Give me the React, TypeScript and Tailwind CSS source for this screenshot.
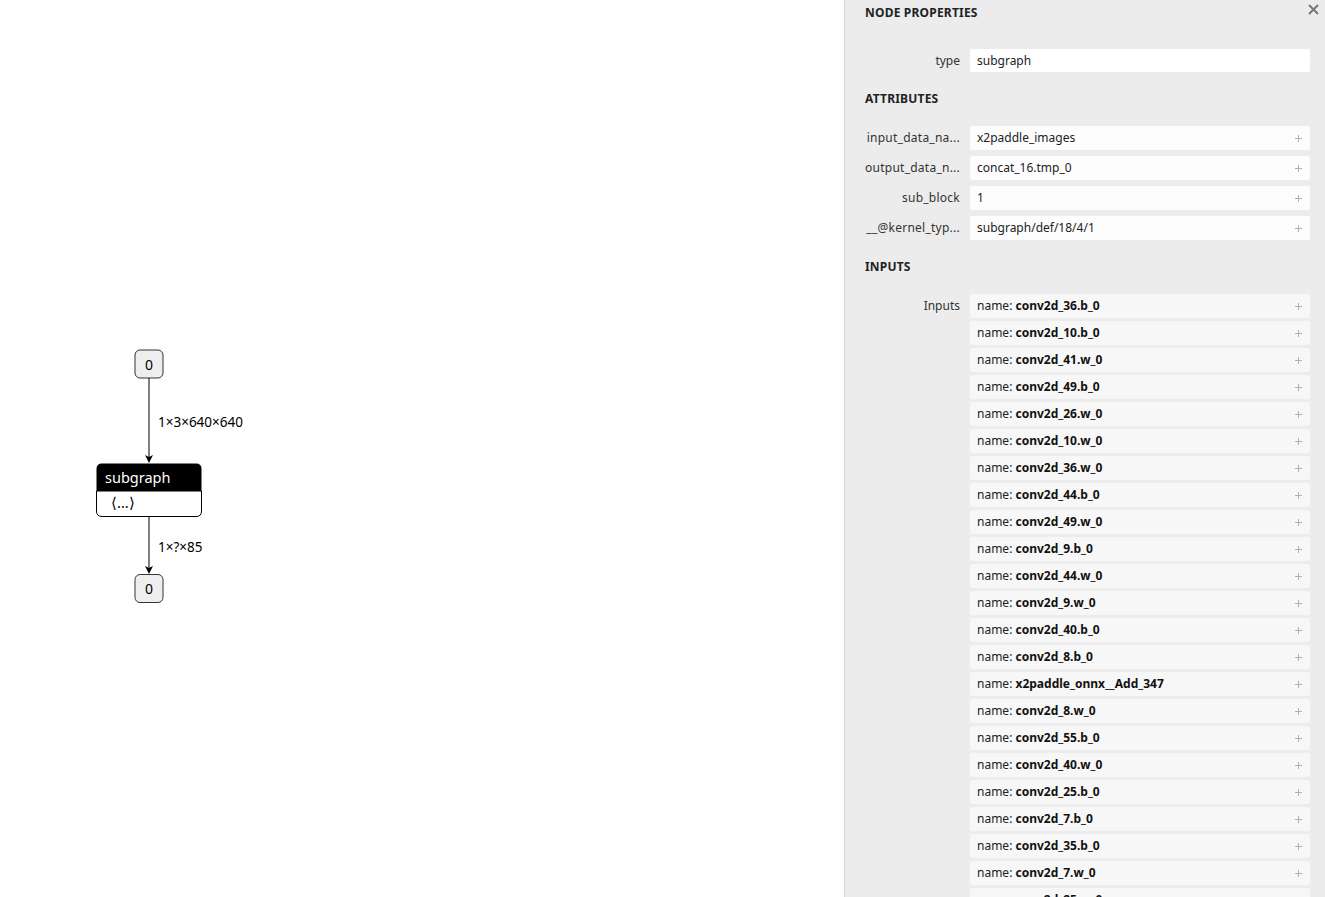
import React from "react"

const attributes = [
  { name: "input_data_na...", value: "x2paddle_images" },
  { name: "output_data_n...", value: "concat_16.tmp_0" },
  { name: "sub_block", value: "1" },
  { name: "__@kernel_typ...", value: "subgraph/def/18/4/1" },
]

const inputs = [
  "conv2d_36.b_0",
  "conv2d_10.b_0",
  "conv2d_41.w_0",
  "conv2d_49.b_0",
  "conv2d_26.w_0",
  "conv2d_10.w_0",
  "conv2d_36.w_0",
  "conv2d_44.b_0",
  "conv2d_49.w_0",
  "conv2d_9.b_0",
  "conv2d_44.w_0",
  "conv2d_9.w_0",
  "conv2d_40.b_0",
  "conv2d_8.b_0",
  "x2paddle_onnx__Add_347",
  "conv2d_8.w_0",
  "conv2d_55.b_0",
  "conv2d_40.w_0",
  "conv2d_25.b_0",
  "conv2d_7.b_0",
  "conv2d_35.b_0",
  "conv2d_7.w_0",
  "conv2d_25.w_0",
]

const Plus = () => (
  <svg width="7" height="7" viewBox="0 0 7 7" className="shrink-0">
    <path d="M3.5,0 V7 M0,3.5 H7" stroke="#b0b0b0" strokeWidth="1" />
  </svg>
)

const Graph = () => (
  <svg width="844" height="897" className="block" style={{ fontFamily: "'Noto Sans', sans-serif" }}>
    {/* input node */}
    <rect x="135" y="350" width="28" height="28" rx="5" fill="#eeeeee" stroke="#333" strokeWidth="1" />
    <text x="149" y="369.5" textAnchor="middle" fontSize="14" fill="#000">0</text>

    {/* edge in */}
    <line x1="149" y1="378" x2="149" y2="458" stroke="#000" strokeWidth="1" />
    <path d="M145,455 L149,463 L153,455 L149,457 Z" fill="#000" />
    <text x="158" y="427" fontSize="13.5" fill="#000">1×3×640×640</text>

    {/* subgraph node */}
    <path d="M96.5,491 L96.5,469 Q96.5,463.5 102,463.5 L196,463.5 Q201.5,463.5 201.5,469 L201.5,491 Z" fill="#000" />
    <path d="M96.5,491 L96.5,511 Q96.5,516.5 102,516.5 L196,516.5 Q201.5,516.5 201.5,511 L201.5,491 Z" fill="#fff" stroke="#000" strokeWidth="1" />
    <text x="105" y="483" fontSize="14.5" fill="#fff">subgraph</text>
    <text x="111" y="508" fontSize="14.5" fill="#000">⟨...⟩</text>

    {/* edge out */}
    <line x1="149" y1="517" x2="149" y2="569" stroke="#000" strokeWidth="1" />
    <path d="M145,566 L149,574 L153,566 L149,568 Z" fill="#000" />
    <text x="158" y="552" fontSize="13.5" fill="#000">1×?×85</text>

    {/* output node */}
    <rect x="135" y="574.5" width="28" height="28" rx="5" fill="#eeeeee" stroke="#333" strokeWidth="1" />
    <text x="149" y="594" textAnchor="middle" fontSize="14" fill="#000">0</text>
  </svg>
)

const SectionTitle = ({ children, className }: { children: React.ReactNode; className?: string }) => (
  <div className={"text-[12px] leading-[16px] font-bold text-[#222] tracking-[0.2px] " + (className ?? "")}>
    {children}
  </div>
)

export default function App() {
  return (
    <div
      className="flex h-[897px] w-[1325px] overflow-hidden bg-white"
      style={{ fontFamily: "'Noto Sans', 'DejaVu Sans', sans-serif" }}
    >
      <div className="w-[844px] shrink-0">
        <Graph />
      </div>
      <div className="relative flex-1 border-l border-[#d4d4d4] bg-[#ececec] pl-[20px] pr-[15px] pt-[5px]">
        <svg width="11" height="11" viewBox="0 0 11 11" className="absolute right-[6px] top-[4px]">
          <path d="M1,1 L10,10 M10,1 L1,10" stroke="#777" strokeWidth="2" />
        </svg>
        <SectionTitle>NODE PROPERTIES</SectionTitle>

        <div className="mt-[28px] flex items-center">
          <div className="w-[105px] shrink-0 pr-[10px] text-right text-[12px] text-[#333]">type</div>
          <div className="flex h-[23px] flex-1 items-center rounded-[2px] bg-white px-[7px] text-[12px] text-[#222]">
            subgraph
          </div>
        </div>

        <SectionTitle className="mt-[19px]">ATTRIBUTES</SectionTitle>

        <div className="mt-[19px] flex flex-col gap-[6px]">
          {attributes.map((a) => (
            <div key={a.name} className="flex items-center">
              <div className="w-[105px] shrink-0 whitespace-nowrap pr-[10px] text-right text-[12px] tracking-[0.25px] text-[#333]">
                {a.name}
              </div>
              <div className="flex h-[24px] flex-1 items-center justify-between rounded-[2px] bg-[#fdfdfd] pl-[7px] pr-[8px] text-[12px] text-[#222]">
                <span>{a.value}</span>
                <Plus />
              </div>
            </div>
          ))}
        </div>

        <SectionTitle className="mt-[19px]">INPUTS</SectionTitle>

        <div className="mt-[19px] flex">
          <div className="w-[105px] shrink-0 pr-[10px] pt-[3px] text-right text-[12px] text-[#333]">Inputs</div>
          <div className="flex flex-1 flex-col gap-[3px]">
            {inputs.map((n) => (
              <div
                key={n}
                className="flex h-[24px] shrink-0 items-center justify-between rounded-[2px] bg-[#f7f7f7] pl-[7px] pr-[8px] text-[12px] text-[#222]"
              >
                <span>
                  name: <span className="font-bold text-[#111]">{n}</span>
                </span>
                <Plus />
              </div>
            ))}
          </div>
        </div>
      </div>
    </div>
  )
}
